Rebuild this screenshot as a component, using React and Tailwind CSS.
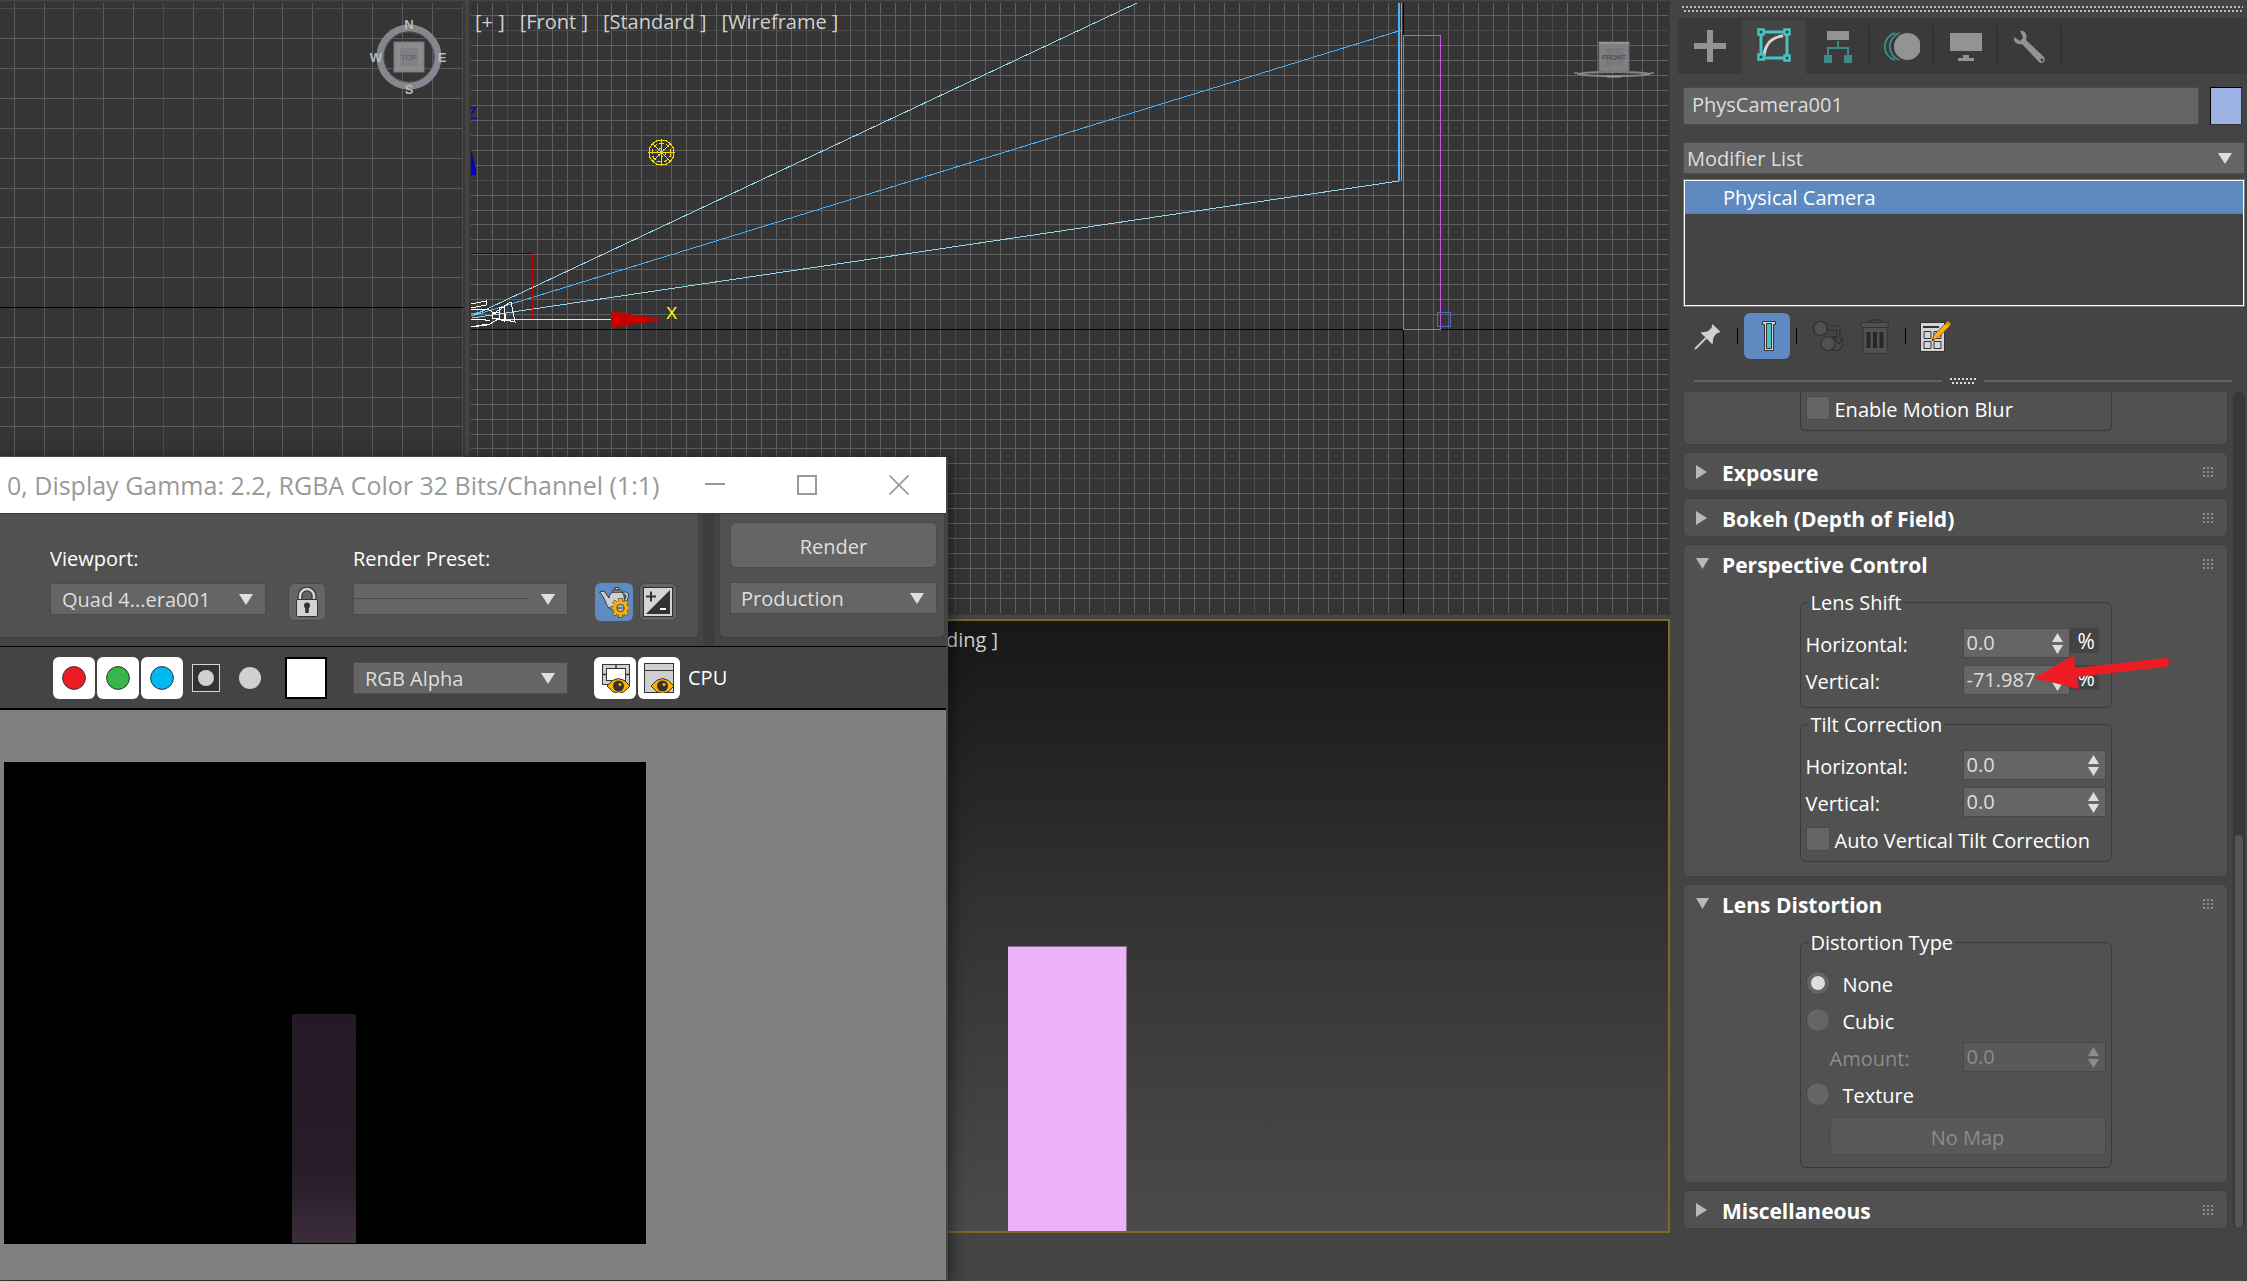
import React, { useState } from 'react';
import clsx from 'clsx';

const GRID_STEP = 14.935;

const range = (from, to) => Array.from({ length: to - from + 1 }, (_, i) => from + i);

/* ---------- viewports ---------- */

// Grid lines are spread out from the world origin, every tenth one is dimmer
const Grid = ({ originX, originY, step, cols, rows, color, dimColor, axisX = true }) => (
  <g shapeRendering="crispEdges">
    {range(cols[0], cols[1]).map((n) => (
      <rect key={`c${n}`} x={Math.round(originX + n * step)} y="0" width="1" height="100%" fill={n % 10 === 0 ? dimColor : color} />
    ))}
    {range(rows[0], rows[1]).map((n) => (
      <rect key={`r${n}`} x="0" y={Math.round(originY + n * step)} width="100%" height="1" fill={n % 10 === 0 ? dimColor : color} />
    ))}
    <rect x="0" y={originY} width="100%" height="1" fill="#000" />
    {axisX && <rect x={originX} y="0" width="1" height="100%" fill="#000" />}
  </g>
);

const Viewport = ({ className, children }) => (
  <section className={clsx('relative overflow-hidden border-2', className)}>{children}</section>
);

const CubeTop = () => (
  <svg className="absolute top-[9px] right-[9px] size-[90px]" viewBox="0 0 90 90">
    <circle cx="45" cy="45" r="29" fill="none" stroke="#84878d" strokeWidth="7" />
    <circle cx="45" cy="45" r="25" fill="none" stroke="#50545a" strokeWidth="1" />
    <rect x="30" y="30" width="30" height="30" fill="#8b8b8b" stroke="#777" />
    <rect x="36" y="36" width="18" height="18" fill="#7f8187" />
    <g fontFamily="Liberation Sans, sans-serif" textAnchor="middle">
      <text x="45" y="48" fontSize="8" fill="#55585e">TOP</text>
      <g fontSize="13" fontWeight="bold" fill="#b9babc">
        <text x="45" y="17">N</text>
        <text x="45" y="82">S</text>
        <text x="12" y="50">W</text>
        <text x="78" y="50">E</text>
      </g>
    </g>
  </svg>
);

const CubeFront = () => (
  <svg className="absolute top-[9px] right-[9px] size-[90px]" viewBox="0 0 90 90">
    <ellipse cx="45" cy="62" rx="36" ry="2" fill="none" stroke="#85878b" strokeWidth="2" />
    <path d="M5 61h4M81 61h4M38 65h14" stroke="#a5a6a8" strokeWidth="1" />
    <rect x="30" y="30" width="30" height="30" fill="#808080" stroke="#6d6d6d" />
    <path d="M30 31h30" stroke="#949494" strokeWidth="2" />
    <rect x="36" y="36" width="18" height="18" fill="#77797d" />
    <path d="M45 30v30M30 48h30" stroke="#8f8f8f" strokeWidth="1" opacity=".5" />
    <text x="45" y="48" fontSize="7" fontWeight="bold" fill="#505359" textAnchor="middle" fontFamily="Liberation Sans, sans-serif">FRONT</text>
  </svg>
);

const TopView = () => (
  <Viewport className="border-l-0 border-[#383838] bg-[#353535]">
    <svg className="absolute inset-0 h-full w-full">
      <Grid originX={163} originY={304} step={GRID_STEP * 2} cols={[-5, 10]} rows={[-10, 10]} color="#5b5b5b" dimColor="#4b4b4b" axisX={false} />
    </svg>
    <CubeTop />
  </Viewport>
);

const FrontView = () => (
  <Viewport className="border-[#383838] bg-[#353535]">
    <svg className="absolute inset-0 h-full w-full" fill="none">
      <Grid originX={932} originY={326} step={GRID_STEP} cols={[-62, 17]} rows={[-21, 19]} color="#606060" dimColor="#4a4a4a" />

      {/* camera cone */}
      <g shapeRendering="crispEdges">
        <path d="M1 313L666 0M1 315L928 178" stroke="#9bd6ee" />
        <path d="M1 313L931 27" stroke="#4ab0f8" />
        <path d="M928 0v178" stroke="#4ab0f8" strokeWidth="2" />
        <path d="M930.5 0v178" stroke="#4ab0f8" />
        <rect x="932.5" y="32.5" width="37" height="294" stroke="#c455dc" />
        <rect x="966.5" y="309.5" width="13" height="14" stroke="#4c6fc6" />
      </g>

      {/* omni light */}
      <g stroke="#f2dc0c" shapeRendering="crispEdges">
        <circle cx="190.5" cy="149.5" r="12.5" />
        <circle cx="190.5" cy="149.5" r="9.5" strokeDasharray="5 2" />
        <circle cx="190.5" cy="149.5" r="4" strokeDasharray="2 2" />
        <path d="M177 149.5h27M190.5 136v27M182 141l17 17M199 141l-17 17" />
      </g>

      {/* transform gizmo */}
      <path d="M0 250.5h61" stroke="#0000b8" />
      <path d="M61.5 251v65" stroke="#c40000" />
      <path d="M0 145l1 5l4 17v5H0z" fill="#0000c8" />
      <path d="M35 316.5h105" stroke="#ffff00" />
      <path d="M140 308l51 8v1l-51 8z" fill="#c80000" />
      <path d="M190 316.5h5" stroke="#c80000" />
      <g fontFamily="Liberation Sans, sans-serif" fontSize="17">
        <text x="6" y="116" textAnchor="end" fill="#0000d0">Z</text>
        <text x="195" y="316" fill="#ffff00">X</text>
      </g>

      {/* camera body */}
      <g stroke="#fff" shapeRendering="crispEdges">
        <path d="M0 301l15-3v4l-15 3M0 306l18 1l5 3l5-3l5-3v14l-6-2l-8 5l-3 1l-16 2" />
        <path d="M0 317l10-1l9 2M0 324l16-3" />
        <path d="M21 311l7-2v7l-7-1zM28 305l5-1l1 13l-6-1zM33 303l7-4l4 20l-9-2z" />
        <path d="M0 311l10-2M0 313l12-3" stroke="#64bdf0" />
      </g>
    </svg>
    <div className="absolute top-[6px] left-[4px] flex gap-[15px] text-[20px] leading-[26px] text-[#d0d0d0]">
      <span>[+ ]</span>
      <span>[Front ]</span>
      <span>[Standard ]</span>
      <span>[Wireframe ]</span>
    </div>
    <CubeFront />
  </Viewport>
);

const CameraView = () => (
  <Viewport className="col-start-2 border-[#7d6828] bg-linear-to-b from-[#171717] via-[#343434] to-[#4b4b4b]">
    <div className="absolute bottom-0 left-[537px] h-[285px] w-[119px] border-t border-r border-[#8a6f92] bg-[#edb3f8]" />
    <span className="absolute top-[6px] left-[475px] text-[20px] leading-[26px] text-[#d0d0d0]">ding ]</span>
  </Viewport>
);

/* ---------- shared controls ---------- */

const Triangle = ({ className, dir = 'down' }) => (
  <svg className={clsx('shrink-0', className)} viewBox="0 0 14 12" fill="currentColor" preserveAspectRatio="none">
    {dir === 'down' && <path d="M0 0h14L7 12z" />}
    {dir === 'up' && <path d="M7 0l7 12H0z" />}
    {dir === 'right' && <path d="M0 0l14 6L0 12z" />}
  </svg>
);

const Select = ({ id, label, className, children }) => (
  <div className="relative">
    <select
      id={id}
      aria-label={label}
      className={clsx('block h-8 w-full appearance-none rounded-none border border-[#4b4b4b] bg-[#656565] pt-[2px] text-[20px] leading-[28px] text-[#dedede]', className)}
    >
      {children}
    </select>
    <Triangle className="pointer-events-none absolute top-[11px] right-[13px] h-[11px] w-[14px] text-[#dedede]" />
  </div>
);

const Dots = ({ id, className, color = '#cfcfcf' }) => (
  <svg className={clsx('block h-[6px]', className)} shapeRendering="crispEdges">
    <defs>
      <pattern id={id} width="4" height="6" patternUnits="userSpaceOnUse">
        <rect width="2" height="2" fill={color} />
        <rect x="2" y="4" width="2" height="2" fill={color} />
      </pattern>
    </defs>
    <rect width="100%" height="6" fill={`url(#${id})`} />
  </svg>
);

/* ---------- render window ---------- */

const RenderWindow = () => (
  <div className="absolute top-[457px] bottom-px left-0 flex w-[948px] flex-col border-r-2 border-[#444] bg-[#444] shadow-[2px_4px_16px_rgba(0,0,0,0.55)]">
    <header className="flex h-14 shrink-0 items-center bg-white text-[#999]">
      <h1 className="flex-1 pl-[7px] text-[25px] leading-8 whitespace-nowrap">
        0, Display Gamma: 2.2, RGBA Color 32 Bits/Channel (1:1)
      </h1>
      <div className="flex self-stretch pr-px">
        <button type="button" aria-label="Minimize" className="flex w-[92px] items-center justify-center">
          <svg className="size-5" viewBox="0 0 20 20"><path d="M0 9h20" stroke="currentColor" strokeWidth="2" /></svg>
        </button>
        <button type="button" aria-label="Maximize" className="flex w-[92px] items-center justify-center">
          <svg className="size-5" viewBox="0 0 20 20"><rect x="1" y="1" width="18" height="18" fill="none" stroke="currentColor" strokeWidth="2" /></svg>
        </button>
        <button type="button" aria-label="Close" className="flex w-[92px] items-center justify-center">
          <svg className="size-5" viewBox="0 0 20 20"><path d="M.5.5l19 19M19.5.5l-19 19" stroke="currentColor" strokeWidth="1.6" /></svg>
        </button>
      </div>
    </header>

    <div className="flex shrink-0 border-t border-[#3c3c3c]">
      <div className="mb-2 flex w-[699px] items-start gap-[27px] rounded-br-md border-r border-b border-[#404040] bg-[#515151] pt-[31px] pb-4 pl-[50px]">
        <div className="flex items-start gap-[22px]">
          <div className="w-[216px]">
            <label htmlFor="viewport" className="mb-[10px] block text-[20px] leading-7 text-white">Viewport:</label>
            <Select id="viewport" className="pl-[11px]">
              <option>Quad 4...era001</option>
            </Select>
          </div>
          <button type="button" aria-label="Lock viewport" className="mt-[38px] flex size-[38px] items-center justify-center rounded-md border border-[#484848] bg-[#656565]">
            <svg className="h-[30px] w-[22px]" viewBox="0 0 22 30">
              <path d="M4 14V9a7 7 0 0 1 14 0v5" fill="none" stroke="#333" strokeWidth="5" />
              <path d="M4 14V9a7 7 0 0 1 14 0v5" fill="none" stroke="#d4d4d4" strokeWidth="2.6" />
              <rect x=".5" y="12.5" width="21" height="17" rx="1.5" fill="#d4d4d4" stroke="#333" />
              <circle cx="11" cy="18.5" r="3" fill="#333" />
              <path d="M9.2 19h3.6v7H9.2z" fill="#333" />
            </svg>
          </button>
        </div>
        <div className="w-[215px]">
          <label htmlFor="preset" className="mb-[10px] block text-[20px] leading-7 text-white">Render Preset:</label>
          <div className="relative">
            <Select id="preset" className="pl-[11px]">
              <option value="" />
            </Select>
            <div className="pointer-events-none absolute top-[15px] left-px h-px w-[173px] bg-[#484848]" />
          </div>
        </div>
        <div className="mt-[38px] flex gap-[6px]">
          <button type="button" aria-label="Render setup" className="flex size-[38px] items-center justify-center rounded-md bg-[#5f8bc3]">
            <svg className="h-8 w-[30px]" viewBox="0 0 30 32">
              <g stroke="#333" strokeWidth="1" strokeLinejoin="round" fill="#d0d0d0">
                <path d="M23 7c5-3 8 1 6 5c-1 3-4 5-7 7l-1-2c3-2 6-4 6-7c0-2-2-2-4-1z" />
                <path d="M.5 6L5 5l5 7c0-3 2-5 4-6h9c2 3 3 6 2 9c-1 4-4 6-6 7h-9C7 20 7 13 .5 6z" />
                <path d="M13.5 6l1-2h7l2 2zM16 4V1.5h4V4z" />
              </g>
              <g transform="translate(21.5 22)">
                {range(0, 7).map((n) => (
                  <rect key={n} x="-1.8" y="-9.5" width="3.6" height="5" fill="#ffb000" stroke="#333" strokeWidth=".6" transform={`rotate(${n * 45})`} />
                ))}
                <circle r="5.5" fill="#5f8bc3" stroke="#ffb000" strokeWidth="3" />
                <circle r="3.7" fill="#b9b9b9" stroke="#333" strokeWidth=".8" />
                <path d="M-3 0h6" stroke="#333" />
              </g>
            </svg>
          </button>
          <button type="button" aria-label="Environment and exposure" className="flex size-[38px] items-center justify-center rounded-md border border-[#484848] bg-[#656565]">
            <svg className="size-[30px]" viewBox="0 0 30 30">
              <rect x=".5" y=".5" width="29" height="29" fill="#d4d4d4" stroke="#2e2e2e" />
              <path d="M27 3v24H3z" fill="#333" />
              <path d="M3 9.5h10M8 4.5v10" stroke="#333" strokeWidth="2" />
              <path d="M17 22h6" stroke="#fff" strokeWidth="2" />
            </svg>
          </button>
        </div>
      </div>

      <div className="mx-[4px] w-[12px] rounded-b-lg bg-[#3d3d3d]" />

      <div className="mr-px mb-2 flex flex-1 flex-col gap-[14px] rounded-b-md border-x border-b border-[#404040] bg-[#515151] px-[7px] pt-2 pl-[10px]">
        <button type="button" className="h-[46px] rounded-md border border-[#4b4b4b] bg-[#656565] pt-1 text-[20px] text-[#dedede]">Render</button>
        <Select label="Render mode" className="pl-[10px]">
          <option>Production</option>
        </Select>
      </div>
    </div>

    <div className="flex h-[64px] shrink-0 items-center border-t border-b-2 border-black pl-[53px]">
      <div className="flex gap-[2px]">
        {[
          ['Red channel', '#ed1c24'],
          ['Green channel', '#3ab54a'],
          ['Blue channel', '#00b9f2'],
        ].map(([name, color]) => (
          <button key={name} type="button" aria-label={name} className="flex size-[42px] items-center justify-center rounded-md bg-white">
            <svg className="size-6" viewBox="0 0 24 24"><circle cx="12" cy="12" r="11.4" fill={color} stroke="#333" /></svg>
          </button>
        ))}
        <button type="button" aria-label="Alpha channel" className="flex size-[42px] items-center justify-center">
          <svg className="size-[28px]" viewBox="0 0 28 28">
            <rect x=".5" y=".5" width="27" height="27" fill="#333" stroke="#d4d4d4" />
            <circle cx="14" cy="14" r="8" fill="#d0d0d0" />
          </svg>
        </button>
        <button type="button" aria-label="Monochrome" className="flex size-[42px] items-center justify-center">
          <svg className="size-[24px]" viewBox="0 0 24 24"><circle cx="12" cy="12" r="11" fill="#d0d0d0" /></svg>
        </button>
      </div>
      <button type="button" aria-label="Background color" className="ml-[14px] size-[42px] border-2 border-black bg-white" />
      <div className="ml-[26px] w-[215px]">
        <Select label="Channel display" className="pl-[11px]">
          <option>RGB Alpha</option>
        </Select>
      </div>
      <div className="ml-[26px] flex gap-[2px]">
        <button type="button" aria-label="Toggle UI overlays" className="flex size-[42px] items-center justify-center rounded-md bg-white">
          <svg className="size-[30px]" viewBox="0 0 30 30">
            <rect x="2.5" y="1.5" width="27" height="20" fill="#cfcfcf" stroke="#333" />
            <path d="M16 1v5M2 11.5h4M26 11.5h4M16 17v5" stroke="#333" strokeWidth="1.5" />
            <rect x="6.5" y="5.5" width="19" height="12" fill="#fff" stroke="#333" />
            <Eye />
          </svg>
        </button>
        <button type="button" aria-label="Toggle UI" className="flex size-[42px] items-center justify-center rounded-md bg-white">
          <svg className="size-[30px]" viewBox="0 0 30 30">
            <rect x=".5" y=".5" width="29" height="29" fill="#cfcfcf" stroke="#333" />
            <path d="M1 7.5h28" stroke="#333" />
            <Eye />
          </svg>
        </button>
      </div>
      <span className="ml-2 text-[20px] leading-7 text-white">CPU</span>
    </div>

    <div className="flex-1 bg-[#808080] pt-[52px] pl-1">
      <div className="flex h-[482px] w-[642px] items-end bg-black pb-px pl-[288px]">
        <div className="h-[229px] w-[64px] bg-linear-to-b from-[#241826] from-0% via-[#281c29] via-70% to-[#3b2d3b] to-100%" />
      </div>
    </div>
  </div>
);

const Eye = () => (
  <g>
    <path d="M7 23Q18.5 8 30 23Q18.5 38 7 23z" fill="#ffb000" stroke="#333" />
    <circle cx="18.5" cy="23" r="5.5" fill="#333" />
    <circle cx="20" cy="21.5" r="1.6" fill="#ffb000" />
  </g>
);

/* ---------- command panel ---------- */

const TEAL = '#3f8886';
const GRAY = '#939393';

const tabs = [
  {
    name: 'Create',
    icon: <path d="M19 2v13h13v6H19v13h-6V21H0v-6h13V2z" transform="translate(2 0)" fill={GRAY} />,
  },
  {
    name: 'Modify',
    icon: (
      <g fill="none">
        <rect x="5" y="4" width="26" height="26" stroke="#46c3c3" strokeWidth="3" />
        <path d="M8 28C9 17 15 9 27 8" stroke="#d4d4d4" strokeWidth="3" />
        {[[5, 4], [31, 4], [5, 29], [31, 30]].map(([x, y]) => (
          <rect key={`${x}-${y}`} x={x - 2.5} y={y - 2.5} width="5" height="5" fill="#333" stroke="#46c3c3" strokeWidth="2.5" />
        ))}
      </g>
    ),
  },
  {
    name: 'Hierarchy',
    icon: (
      <g>
        <path d="M7 3h22v9H7z" fill={GRAY} />
        <path d="M18 13v7M8 27v-7h20v7" fill="none" stroke={TEAL} strokeWidth="2" />
        <path d="M4 27h8v8H4zM24 27h8v8h-8z" fill={TEAL} />
      </g>
    ),
  },
  {
    name: 'Motion',
    icon: (
      <g>
        <path d="M16 5a14 14 0 0 0 0 27M11 5a14 14 0 0 0 0 27" fill="none" stroke={TEAL} strokeWidth="2" />
        <circle cx="23" cy="18.5" r="15" fill="#3a3a3a" />
        <circle cx="23.5" cy="18.5" r="13.5" fill={GRAY} />
      </g>
    ),
  },
  {
    name: 'Display',
    icon: <path d="M2 5h32v18H2zM15 27h6v3h5v3H10v-3h5z" fill={GRAY} />,
  },
  {
    name: 'Utilities',
    icon: (
      <g fill={GRAY}>
        <path d="M8 3c4-1 8 3 6 9l18 17c2 3 0 6-3 6c-1 0-2-1-3-2L10 16C5 17 1 14 2 9l6 4l3-3l-1-3z" />
        <circle cx="30" cy="32" r="1.4" fill="#3a3a3a" />
      </g>
    ),
  },
];

const TabBar = () => {
  const [active, setActive] = useState('Modify');

  return (
    <div className="ml-2 flex h-14 bg-[#3a3a3a]">
      {tabs.map((tab, i) => (
        <button
          key={tab.name}
          type="button"
          aria-label={tab.name}
          onClick={() => setActive(tab.name)}
          className={clsx('relative flex w-16 items-center justify-center', active === tab.name && 'mt-[2px] bg-[#444] pb-[2px]')}
        >
          <svg className="size-9" viewBox="0 0 36 36">{tab.icon}</svg>
          {i > 1 && <span className="absolute top-2 right-0 h-[38px] w-[2px] bg-[#323232]" />}
        </button>
      ))}
    </div>
  );
};

const Separator = () => <span className="h-4 w-px bg-black" />;

const StackTools = () => (
  <div className="flex h-[46px] items-center pl-[11px]">
    <button type="button" aria-label="Pin stack" className="mr-[16px]">
      <svg className="size-[27px]" viewBox="0 0 27 27">
        <path d="M1 26L12 15" stroke="#cfcfcf" strokeWidth="1.8" />
        <path d="M18.500 1l8 8l-4 1.500l-3 4l-1 7l-12-12l7-1l4-3.500z" fill="#cfcfcf" />
      </svg>
    </button>
    <Separator />
    <button type="button" aria-label="Show end result" className="mx-[6px] flex size-[46px] items-center justify-center rounded-md bg-[#5f8ac1]">
      <svg className="ml-1 h-[30px] w-[14px]" viewBox="0 0 14 30">
        <path d="M.5.5h13v3h-2v26h-9v-26h-2z" fill="#d4d4d4" stroke="#333" />
        <path d="M4.5 2.5h5v25h-5z" fill="#46c3c3" stroke="#333" />
      </svg>
    </button>
    <Separator />
    <button type="button" aria-label="Make unique" disabled className="ml-[16px]">
      <svg className="size-[30px]" viewBox="0 0 30 30" fill="none" stroke="#2f2f2f" strokeWidth="1.2">
        <circle cx="22.5" cy="22.5" r="7" fill="#4b4b4b" />
        <circle cx="7.5" cy="7.5" r="7" fill="#515151" />
        <path d="M14 5h13v12h3l-4.5 6l-4.5-6h3V9H14z" fill="#484848" />
        <circle cx="15" cy="22.5" r="7" fill="#515151" />
      </svg>
    </button>
    <button type="button" aria-label="Remove modifier" disabled className="ml-[18px]">
      <svg className="h-[35px] w-[28px]" viewBox="0 0 28 35" stroke="#333">
        <path d="M8 3.5Q8 1 10 1h8q2 0 2 2.5" fill="none" strokeWidth="1.5" />
        <rect x=".6" y="3.6" width="26.8" height="5" rx="1" fill="#515151" />
        <path d="M2 8.5h24v24q0 2-2 2H4q-2 0-2-2z" fill="#515151" />
        <path d="M7.5 13v16M14 13v16M20.5 13v16" stroke="#272727" strokeWidth="4" />
      </svg>
    </button>
    <span className="w-4" />
    <Separator />
    <button type="button" aria-label="Configure modifier sets" className="ml-[14px]">
      <svg className="size-[31px]" viewBox="0 0 31 31">
        <rect x=".5" y="1.5" width="24" height="29" fill="#d4d4d4" stroke="#333" />
        <path d="M3 6h16" stroke="#333" strokeWidth="2" />
        <path d="M4 10.5h7v7H4zM14 10.5h7v7h-7zM4 20.5h7v7H4zM14 20.5h7v7h-7z" fill="none" stroke="#333" />
        <path d="M12 19.5l2-5.5L26 2l3.5 3.5L17.5 17z" fill="#ffb000" stroke="#333" strokeWidth=".6" />
        <path d="M26 2l1.5-1.5q3 0 3 3.5l-1.5 1.5z" fill="#f59a00" />
        <path d="M12 20l.8-2.5 1.8 1.8z" fill="#333" />
      </svg>
    </button>
  </div>
);

const Rollout = ({ title, defaultOpen = false, children }) => {
  const [open, setOpen] = useState(defaultOpen);

  return (
    <section className="rounded-md border border-[#404040] bg-[#515151]">
      <button type="button" aria-expanded={open} onClick={() => setOpen(!open)} className="flex h-[37px] w-full items-center pr-[14px] pl-3">
        <span className="flex w-[26px]">
          {open ? <Triangle className="h-[11px] w-[13px] text-[#b8b8b8]" /> : <Triangle dir="right" className="h-[14px] w-[11px] text-[#b8b8b8]" />}
        </span>
        <span className="flex-1 pt-[2px] text-left text-[21px] leading-7 font-bold text-white">{title}</span>
        <svg className="size-[10px]" viewBox="0 0 10 10" fill="#8c8c8c" shapeRendering="crispEdges">
          {[0, 4, 8].map((y) => [0, 4, 8].map((x) => <rect key={`${x}-${y}`} x={x} y={y} width="2" height="2" />))}
        </svg>
      </button>
      {open && <div className="flex flex-col items-center gap-[2px] pt-[6px] pb-[14px]">{children}</div>}
    </section>
  );
};

const Group = ({ title, className, children }) => (
  <fieldset className={clsx('w-[312px] rounded-md border border-[#3a3a3a] px-[5px]', className)}>
    <legend className="ml-[3px] px-[2px] pt-[2px] text-[20px] leading-[26px] text-white">{title}</legend>
    <div className="flex flex-col gap-[7px] pt-3">{children}</div>
  </fieldset>
);

const Spinner = ({ id, label, value, unit, disabled, indent, children }) => (
  <div className={clsx('relative flex h-[30px] items-center', indent && 'pl-6')}>
    <label htmlFor={id} className={clsx('flex-1 pt-[3px] text-[20px] leading-7', disabled ? 'text-[#8c8c8c]' : 'text-white')}>
      {label}
    </label>
    <div className="flex w-[143px] items-start">
      <div className={clsx('flex h-[30px] flex-1 items-center border border-[#484848] pr-[6px]', disabled ? 'bg-[#595959] text-[#8c8c8c]' : 'bg-[#656565] text-[#dedede]')}>
        <input id={id} type="text" defaultValue={value} disabled={disabled} className="w-0 flex-1 bg-transparent pl-[3px] text-[20px] leading-7 outline-none" />
        <span className="flex flex-col gap-[3px]">
          <button type="button" aria-label={`Increase ${label}`} disabled={disabled}>
            <Triangle dir="up" className="block h-[9px] w-[11px]" />
          </button>
          <button type="button" aria-label={`Decrease ${label}`} disabled={disabled}>
            <Triangle className="block h-[9px] w-[11px]" />
          </button>
        </span>
      </div>
      {unit && (
        <span className="mr-[7px] h-[25px] w-[29px] bg-[#434343] pl-2 text-[21px] leading-[26px] text-white">{unit}</span>
      )}
    </div>
    {children}
  </div>
);

const Checkbox = ({ label }) => (
  <label className="flex h-[30px] items-center gap-[5px] text-[20px] leading-7 whitespace-nowrap text-white">
    <input type="checkbox" className="size-6 shrink-0 appearance-none border border-[#484848] bg-[#656565] checked:bg-[#dedede]" />
    <span className="pt-[3px]">{label}</span>
  </label>
);

const Radio = ({ label, ...props }) => (
  <label className="flex h-[30px] items-center gap-[13px] text-[20px] leading-7 text-white">
    <span className="relative flex size-6">
      <input
        type="radio"
        name="distortion"
        className="peer size-6 appearance-none rounded-full border border-[#4b4b4b] bg-[#656565]"
        {...props}
      />
      <span className="pointer-events-none absolute inset-[5px] hidden rounded-full bg-[#dedede] peer-checked:block" />
    </span>
    <span className="pt-[3px]">{label}</span>
  </label>
);

const CommandPanel = () => (
  <aside className="flex w-[577px] shrink-0 flex-col">
    <div className="py-[6px] pr-1 pl-3">
      <Dots id="dock-dots" className="w-full" color="#bdbdbd" />
    </div>
    <TabBar />

    <div className="mt-[13px] flex gap-[11px] pr-[5px] pl-[13px]">
      <input
        type="text"
        aria-label="Object name"
        defaultValue="PhysCamera001"
        className="h-[38px] min-w-0 flex-1 border border-[#4b4b4b] bg-[#656565] pb-1 pl-2 text-[20px] leading-7 text-[#dedede] outline-none"
      />
      <button type="button" aria-label="Object color" className="w-8 border border-black border-r-[#333] border-b-[#333] bg-[#9db3e6]" />
    </div>

    <div className="mt-[17px] pr-[2px] pl-[13px]">
      <Select label="Modifier list" className="pl-[3px]">
        <option>Modifier List</option>
      </Select>
      <ul className="mt-[5px] h-32 border border-[#7a7a7a] bg-[#444] outline -outline-offset-2 outline-white">
        <li className="m-px h-[33px] border-b border-[#7a7a7a] bg-[#5f8ac1] pl-[38px] text-[20px] leading-[34px] text-white">Physical Camera</li>
      </ul>
    </div>

    <div className="mt-[6px] pl-[13px]">
      <StackTools />
    </div>

    <div className="mt-[19px] flex items-center gap-2 pr-[15px] pl-6">
      <span className="h-[2px] flex-1 bg-[#626262]" />
      <Dots id="split-dots" className="w-[26px]" color="#dedede" />
      <span className="h-[2px] flex-1 bg-[#626262]" />
    </div>

    <div className="mt-2 flex gap-[5px] pr-[2px] pl-[13px]">
      <div className="flex flex-1 flex-col gap-[7px]">
        <section className="flex justify-center rounded-b-md border border-t-0 border-[#404040] bg-[#515151] pb-[13px]">
          <div className="w-[312px] rounded-b-md border border-t-0 border-[#3a3a3a] px-[5px] pt-px pb-[7px]">
            <Checkbox label="Enable Motion Blur" />
          </div>
        </section>

        <Rollout title="Exposure" />
        <Rollout title="Bokeh (Depth of Field)" />

        <Rollout title="Perspective Control" defaultOpen>
          <Group title="Lens Shift" className="pb-3">
            <Spinner id="shift-h" label="Horizontal:" value="0.0" unit="%" />
            <Spinner id="shift-v" label="Vertical:" value="-71.987" unit="%">
              <svg className="pointer-events-none absolute -top-3 left-[228px] h-10 w-[136px]" viewBox="0 0 136 40" fill="#ed1c24">
                <path d="M0 25L40 2l1 13L131 5q4 0 4 4t-4 5L43 24l2 12z" />
              </svg>
            </Spinner>
          </Group>
          <Group title="Tilt Correction" className="pb-[7px]">
            <Spinner id="tilt-h" label="Horizontal:" value="0.0" />
            <Spinner id="tilt-v" label="Vertical:" value="0.0" />
            <Checkbox label="Auto Vertical Tilt Correction" />
          </Group>
        </Rollout>

        <Rollout title="Lens Distortion" defaultOpen>
          <Group title="Distortion Type" className="pb-3">
            <Radio label="None" defaultChecked />
            <Radio label="Cubic" />
            <Spinner id="amount" label="Amount:" value="0.0" disabled indent />
            <Radio label="Texture" />
            <button type="button" disabled className="mt-px ml-6 h-[38px] rounded-md border border-[#4b4b4b] bg-[#595959] pt-[3px] text-[20px] leading-7 text-[#8c8c8c]">No Map</button>
          </Group>
        </Rollout>

        <Rollout title="Miscellaneous" />
      </div>

      <div className="flex w-3 flex-col justify-end rounded-full bg-[#383838] px-[2px] pb-px">
        <div className="h-[47%] rounded-full bg-[#545454]" />
      </div>
    </div>
  </aside>
);

const App = () => (
  <div className="flex min-h-screen bg-[#444] font-['Open_Sans','Noto_Sans',sans-serif]">
    <main className="relative grid min-w-0 flex-1 grid-cols-[465fr_1201fr] grid-rows-2 gap-1 overflow-hidden pt-px pb-12">
      <TopView />
      <FrontView />
      <CameraView />
      <RenderWindow />
    </main>
    <CommandPanel />
  </div>
);

export default App;
